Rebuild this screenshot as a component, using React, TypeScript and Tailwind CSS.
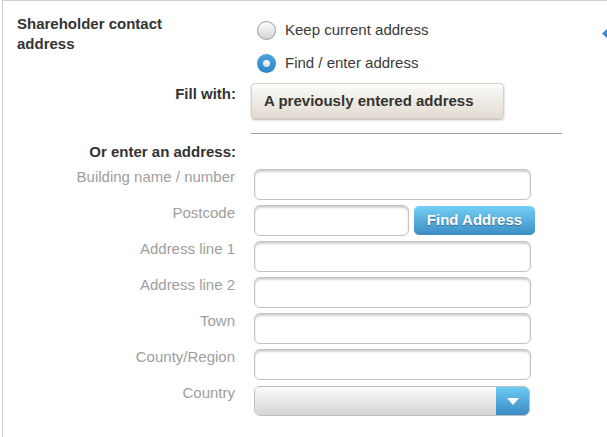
import React from "react";

const rows = [
  "Building name / number",
  "Postcode",
  "Address line 1",
  "Address line 2",
  "Town",
  "County/Region",
  "Country",
];

function TextInput({ className = "w-[277px]" }: { className?: string }) {
  return (
    <input
      type="text"
      className={`h-[31px] rounded-[6px] border border-[#c2c2c2] bg-white px-2 shadow-[inset_0_2px_2px_rgba(0,0,0,0.18)] outline-none ${className}`}
    />
  );
}

function Radio({ checked, label }: { checked?: boolean; label: string }) {
  return (
    <label className="flex h-[24px] items-center gap-[9px]">
      {checked ? (
        <span className="flex size-[19px] items-center justify-center rounded-full bg-gradient-to-b from-[#4aa3dc] to-[#2f86c7]">
          <span className="size-[7px] rounded-full bg-gradient-to-b from-white to-[#dcdcdc]" />
        </span>
      ) : (
        <span className="size-[19px] rounded-full border border-[#9a9a9a] bg-gradient-to-b from-[#fdfdfd] to-[#d4d4d4] shadow-[inset_0_1px_1px_rgba(255,255,255,0.8)]" />
      )}
      <span className="text-[15px] text-[#3a3a3a]">{label}</span>
    </label>
  );
}

export default function App() {
  return (
    <div className="relative h-[437px] w-[607px] overflow-hidden bg-white font-['Liberation_Sans',Arial,sans-serif]">
      <div className="ml-[2px] h-full border-l border-t border-[#cfcfcf]">
        <div className="grid grid-cols-[233px_1fr] gap-x-[15px]">
          {/* header + radios */}
          <div className="pl-[14px] pt-[13px] text-[15px] font-bold leading-[20px] text-[#333]">
            Shareholder contact
            <br />
            address
          </div>
          <div className="flex flex-col gap-[9px] pl-[6px] pt-[17px]">
            <Radio label="Keep current address" />
            <Radio checked label="Find / enter address" />
          </div>

          {/* fill with */}
          <div className="mt-[9px] text-right text-[15px] font-bold leading-[20px] text-[#333]">
            Fill with:
          </div>
          <div className="mt-[8px]">
            <button className="flex h-[36px] w-[253px] items-center rounded-[4px] border border-[#d6d1c8] bg-gradient-to-b from-[#fcfbf9] to-[#e2dcd1] pl-3 text-[15px] font-bold text-[#333] shadow-[0_1px_2px_rgba(0,0,0,0.3)]">
              A previously entered address
            </button>
          </div>

          <div />
          <div className="mt-[14px] w-[311px] border-t border-[#9c9c9c]" />

          <div className="mt-[8px] text-right text-[15px] font-bold leading-[20px] text-[#333]">
            Or enter an address:
          </div>
          <div />
        </div>

        {/* address rows */}
        <div className="mt-[7px] flex flex-col gap-[5px]">
          {rows.map((r) => (
            <div key={r} className="grid grid-cols-[232px_1fr] gap-x-[19px]">
              <div className="text-right text-[15px] leading-[16px] text-[#9e9e9e]">
                {r}
              </div>
              <div className="flex items-start gap-[5px]">
                {r === "Postcode" ? (
                  <>
                    <TextInput className="w-[155px]" />
                    <button className="mt-[1px] h-[29px] w-[121px] rounded-[5px] bg-gradient-to-b from-[#74d0f6] to-[#3c8cc4] text-[15px] font-bold text-white [text-shadow:0_1px_1px_rgba(0,0,0,0.35)]">
                      Find Address
                    </button>
                  </>
                ) : r === "Country" ? (
                  <div className="mt-[1px] flex h-[30px] w-[276px] overflow-hidden rounded-[6px] border border-[#bdbdbd]">
                    <div className="flex-1 bg-gradient-to-b from-[#fbfbfb] to-[#d5d5d5]" />
                    <div className="flex w-[33px] items-center justify-center bg-gradient-to-b from-[#6ccbf4] to-[#3a8bc3]">
                      <svg width="12" height="7" viewBox="0 0 12 7">
                        <path d="M0 0h12L6 7z" fill="#fff" />
                      </svg>
                    </div>
                  </div>
                ) : (
                  <TextInput />
                )}
              </div>
            </div>
          ))}
        </div>
      </div>

      {/* clipped tooltip marker at the right edge */}
      <svg
        className="absolute right-0 top-[29px]"
        width="6"
        height="9"
        viewBox="0 0 6 9"
      >
        <path d="M6 0v9L1 4.5z" fill="#3d8fcc" />
      </svg>
    </div>
  );
}
